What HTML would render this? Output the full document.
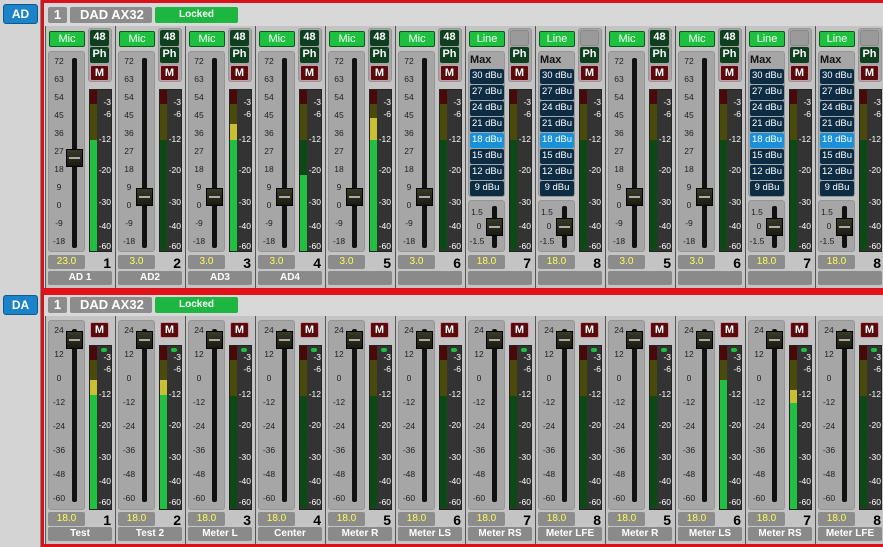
<!DOCTYPE html>
<html><head><meta charset="utf-8"><style>
*{margin:0;padding:0;box-sizing:border-box}
body{width:883px;height:547px;overflow:hidden;background:#d4d4d4;font-family:"Liberation Sans",Arial,sans-serif;position:relative}
.a{position:absolute}
.btnsec{background:#1b83c8;color:#fff;font-size:12px;font-weight:bold;text-align:center;line-height:19px;border-radius:3px;border:1px solid #0d5a90}
.hb{background:#8c8c8c;color:#fff;font-size:13px;font-weight:bold;line-height:16px;border-radius:2px}
.lk{background:#1cb640;color:#fff;font-size:10px;font-weight:bold;text-align:center;line-height:16px;border-radius:2px}
.strip{background:#c4c4c4;border-left:1px solid #555}
.pan{background:#a6a6a6;border-radius:3px;border:1px solid #959595}
.gb{background:#1ec040;color:#fff;font-size:11px;text-align:center;line-height:14px;border:1px solid #0a5a1a;border-radius:2px}
.dg{background:#0e4020;color:#fff;font-size:11px;font-weight:bold;text-align:center;line-height:15px;border-radius:2px}
.mb{background:#5a0a0a;color:#fff;font-size:11px;font-weight:bold;text-align:center;line-height:15px;border-radius:2px;border:1px solid #c9a}
.sc{font-size:8.5px;color:#222;width:20px;text-align:center}
.tr{background:#111;width:5px;border-radius:2px}
.kn{width:17px;height:18px;background:linear-gradient(#3a3a2a,#1a1a10);border:1px solid #000}
.kn:after{content:"";position:absolute;left:2px;right:2px;top:7px;height:2px;background:#aaa}
.met{background:#333;border:1px solid #222}
.ml{font-size:8.5px;color:#fff;text-align:right;width:14px}
.val{background:#8c8c8c;color:#ffff50;font-size:10px;text-align:center;line-height:13px;border-radius:2px}
.num{font-size:14px;font-weight:bold;color:#000;text-align:right}
.nm{background:#8a8a8a;color:#fff;font-size:10px;font-weight:bold;text-align:center;line-height:13px;border-radius:2px}
.db{background:#0c2c44;color:#fff;font-size:9.5px;text-align:center;line-height:14px;border-radius:2px}
.db.s{background:#1a90d8}
.gr{background:#9a9a9a;border-radius:3px;border:1px solid #888}
</style></head><body>
<div class="a" style="left:0;top:0;width:41px;height:547px;background:#d4d4d4;border-right:1px solid #888"></div>
<div class="a btnsec" style="left:3px;top:4px;width:35px;height:20px">AD</div>
<div class="a btnsec" style="left:3px;top:295px;width:35px;height:20px">DA</div>
<div class="a" style="left:41px;top:0;width:842px;height:291px;background:#d8d8d8;border:3px solid #d8121a;border-right:none"></div>
<div class="a" style="left:41px;top:289px;width:842px;height:258px;background:#d8d8d8;border-left:3px solid #d8121a;border-top:6px solid #e0121a;border-bottom:3px solid #d8121a"></div>
<div class="a hb" style="left:48px;top:7px;width:19px;height:16px;text-align:center">1</div>
<div class="a hb" style="left:70px;top:7px;width:82px;height:16px;padding-left:10px">DAD AX32</div>
<div class="a lk" style="left:155px;top:7px;width:83px;height:16px">Locked</div>
<div class="a hb" style="left:48px;top:297px;width:19px;height:16px;text-align:center">1</div>
<div class="a hb" style="left:70px;top:297px;width:82px;height:16px;padding-left:10px">DAD AX32</div>
<div class="a lk" style="left:155px;top:297px;width:83px;height:16px">Locked</div>
<div id="root"></div>
<script>
var h='';
function d(c,x,y,w,hh,t,st){h+='<div class="a '+c+'" style="left:'+x+'px;top:'+y+'px;width:'+w+'px;height:'+hh+'px;'+(st||'')+'">'+(t||'')+'</div>';}
function meter(x,y1,y2,act,yel,labs){
 d('met',x,y1,23,y2-y1);
 var H=y2-y1-2;
 d('',x+1,y1+1,7,14,'','background:#4a0808');
 d('',x+1,y1+15,7,36,'','background:#4a4a0a');
 d('',x+1,y1+51,7,H-51,'','background:#0b4a14');
 if(yel){d('',x+1,yel[0],7,yel[1]-yel[0],'','background:#c8c030');}
 if(act){d('',x+1,act,7,y2-1-act,'','background:#22c040');}
 labs.forEach(function(l){d('ml',x+8,l[1]-5,14,10,l[0]);});
}
var adn=['AD 1','AD2','AD3','AD4','','','','','','','',''];
var nums=[1,2,3,4,5,6,7,8,5,6,7,8];
var line=[6,7,10,11];
var adAct=[140,null,140,175,140,null,null,null,null,null,null,null];
var adYel=[null,null,[124,140],null,[118,140],null,null,null,null,null,null,null];
var adKn=[149,188,188,188,188,188,0,0,188,188,0,0];
var ml=[['-3',102],['-6',114],['-12',139],['-20',170],['-30',202],['-40',226],['-60',246]];
for(var i=0;i<12;i++){
 var x=45+70*i, L=line.indexOf(i)>=0;
 d('strip',x,26,70,262);
 d('pan',x+43,28,24,54);
 if(L){d('gb',x+4,31,36,16,'Line');d('gr',x+45,30,19,16);}
 else{d('gb',x+4,31,36,16,'Mic');d('dg',x+45,30,19,16,'48');}
 d('dg',x+45,47,19,16,'Ph');d('mb',x+45,65,19,16,'M');
 if(!L){
  d('pan',x+3,51,37,201);
  var s=['72','63','54','45','36','27','18','9','0','-9','-18'];
  s.forEach(function(t,k){d('sc',x+4,56+18*k,20,10,t);});
  d('tr',x+27,58,5,190);
  d('kn',x+21,adKn[i],17,18);
 } else {
  d('pan',x+3,51,37,146);
  d('',x+5,54,30,12,'Max','font-size:11px;font-weight:bold;color:#111');
  ['30','27','24','21','18','15','12','9'].forEach(function(t,k){d('db'+(t=='18'?' s':''),x+5,69+16*k,34,15,t+' dBu');});
  d('pan',x+3,200,37,52);
  d('sc',x+2,207,20,10,'1.5');d('sc',x+4,221,20,10,'0');d('sc',x+2,236,20,10,'-1.5');
  d('tr',x+27,206,5,42);d('kn',x+21,218,17,18);
 }
 meter(x+44,89,252,adAct[i],adYel[i],ml);
 d('val',x+3,255,37,14,L?'18.0':(i==0?'23.0':'3.0'));
 d('num',x+42,255,24,14,nums[i]);
 d('nm',x+3,271,64,14,adn[i]);
}
var dan=['Test','Test 2','Meter L','Center','Meter R','Meter LS','Meter RS','Meter LFE','Meter R','Meter LS','Meter RS','Meter LFE'];
var daAct=[395,395,null,null,null,null,null,null,null,380,403,null];
var daYel=[[380,395],[380,395],null,null,null,null,null,null,null,null,[390,403],null];
var ml2=[['-3',357],['-6',369],['-12',394],['-20',425],['-30',457],['-40',481],['-60',502]];
for(var i=0;i<12;i++){
 var x=45+70*i;
 d('strip',x,316,70,228);
 d('pan',x+3,320,37,190);
 ['24','12','0','-12','-24','-36','-48','-60'].forEach(function(t,k){d('sc',x+4,325+24*k,20,10,t);});
 d('tr',x+27,329,5,173);
 d('kn',x+21,331,17,18);
 d('mb',x+45,322,19,16,'M');
 meter(x+44,345,510,daAct[i],daYel[i],ml2);
 d('',x+56,348,6,4,'','background:#1ec040;border-radius:2px');
 d('val',x+3,512,37,14,'18.0');
 d('num',x+42,512,24,14,nums[i]);
 d('nm',x+3,527,64,14,dan[i]);
}
document.getElementById('root').innerHTML=h;
</script>
</body></html>
